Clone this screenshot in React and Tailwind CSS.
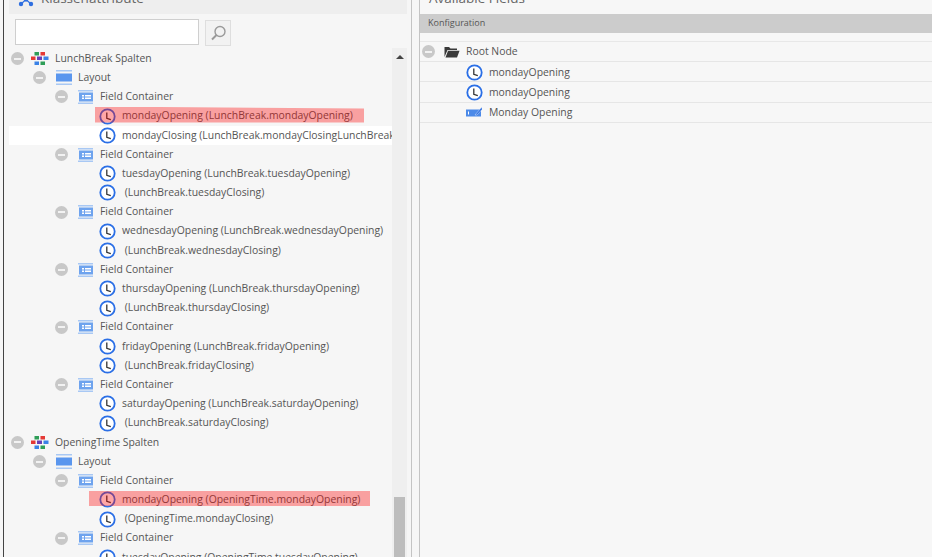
const FONT = "font-['Open_Sans',sans-serif]"

function Minus({ className = "" }) {
  return (
    <span className={`flex h-[13px] w-[13px] shrink-0 items-center justify-center rounded-full bg-[#c8c8c8] ${className}`}>
      <span className="h-[2px] w-[7px] bg-[#f2f2f2]" />
    </span>
  )
}

function ClockIcon() {
  return (
    <svg width="17" height="17" viewBox="0 0 17 17" className="shrink-0">
      <circle cx="8.5" cy="8.5" r="7.2" fill="#fff" stroke="#2b6fe6" strokeWidth="1.8" />
      <path d="M7.8 4.5V10.3L11.8 11.6" fill="none" stroke="#333" strokeWidth="1.3" />
    </svg>
  )
}

function ColumnsIcon() {
  return (
    <svg width="18" height="13" viewBox="0 0 18 13" className="shrink-0">
      <rect x="3.5" y="0" width="4.5" height="3.5" fill="#2f9e58" />
      <rect x="9.5" y="0" width="4.5" height="3.5" fill="#e53935" />
      <rect x="0" y="4.5" width="4.5" height="3.5" fill="#e53935" />
      <rect x="6" y="4.5" width="5" height="3.5" fill="#6a3fb5" />
      <rect x="12.5" y="4.5" width="5" height="3.5" fill="#3b82e6" />
      <rect x="3.5" y="9.5" width="4.5" height="3.5" fill="#3b82e6" />
      <rect x="9.5" y="9.5" width="4.5" height="3.5" fill="#2f9e58" />
    </svg>
  )
}

function LayoutIcon() {
  return (
    <svg width="16" height="15" viewBox="0 0 16 15" className="shrink-0">
      <rect x="0" y="0" width="16" height="1.5" fill="#a8c8f4" />
      <rect x="0" y="3.5" width="16" height="8" fill="#5a96ee" />
      <rect x="0" y="13.5" width="16" height="1.5" fill="#a8c8f4" />
    </svg>
  )
}

function ContainerIcon() {
  return (
    <svg width="15" height="14" viewBox="0 0 15 14" className="shrink-0">
      <rect x="0" y="0" width="15" height="1.5" fill="#a8c8f4" />
      <rect x="1" y="2.5" width="14" height="9" fill="#6ea3ee" />
      <rect x="4" y="5" width="2" height="1.5" fill="#fff" />
      <rect x="7" y="5" width="6" height="1.5" fill="#fff" />
      <rect x="4" y="7.5" width="2" height="1.5" fill="#fff" />
      <rect x="7" y="7.5" width="6" height="1.5" fill="#fff" />
      <rect x="0" y="12.5" width="15" height="1.5" fill="#a8c8f4" />
    </svg>
  )
}

function FolderIcon() {
  return (
    <svg width="16" height="12" viewBox="0 0 16 12" className="shrink-0">
      <path d="M0.5 11V1H5L6.5 2.5H13V4H3.5L0.5 11Z" fill="#3a3a3a" />
      <path d="M1.5 11.5L4 4.8H15.5L13 11.5Z" fill="#3a3a3a" />
    </svg>
  )
}

function InputIcon() {
  return (
    <svg width="16" height="10" viewBox="0 0 16 10" className="shrink-0">
      <rect x="0" y="2.5" width="15" height="7" fill="#4c8ae8" />
      <rect x="2" y="4.5" width="1" height="3" fill="#fff" />
      <path d="M9 8L14.5 1.5L16 0V2.5L11 8Z" fill="#2f6fe0" stroke="#fff" strokeWidth="0.4" />
    </svg>
  )
}

function SearchIcon() {
  return (
    <svg width="18" height="18" viewBox="0 0 18 18">
      <circle cx="11" cy="7.5" r="5" fill="none" stroke="#9a9a9a" strokeWidth="1.4" />
      <path d="M7.5 11L3 15.5" stroke="#9a9a9a" strokeWidth="2" />
    </svg>
  )
}

const groups = [
  {
    title: "LunchBreak Spalten",
    containers: [
      [["mondayOpening (LunchBreak.mondayOpening)", "first"], ["mondayClosing (LunchBreak.mondayClosingLunchBreak)", "hover"]],
      [["tuesdayOpening (LunchBreak.tuesdayOpening)"], [" (LunchBreak.tuesdayClosing)"]],
      [["wednesdayOpening (LunchBreak.wednesdayOpening)"], [" (LunchBreak.wednesdayClosing)"]],
      [["thursdayOpening (LunchBreak.thursdayOpening)"], [" (LunchBreak.thursdayClosing)"]],
      [["fridayOpening (LunchBreak.fridayOpening)"], [" (LunchBreak.fridayClosing)"]],
      [["saturdayOpening (LunchBreak.saturdayOpening)"], [" (LunchBreak.saturdayClosing)"]],
    ],
  },
  {
    title: "OpeningTime Spalten",
    containers: [
      [["mondayOpening (OpeningTime.mondayOpening)", "second"], [" (OpeningTime.mondayClosing)"]],
      [["tuesdayOpening (OpeningTime.tuesdayOpening)"]],
    ],
  },
]

function Row({ children }) {
  return <div className="flex h-[19.2px] shrink-0 items-center whitespace-pre">{children}</div>
}

function FieldRow({ label, mark }) {
  return (
    <div className={`relative flex h-[19.2px] shrink-0 items-center whitespace-pre pl-[90px] ${mark === "hover" ? "bg-white" : ""}`}>
      <ClockIcon />
      <span className="ml-[6px]">{label}</span>
      {mark === "first" && (
        <span className="absolute left-[86px] top-[0px] h-[16px] w-[269px] bg-[#ff0000]/35 [clip-path:polygon(0_0,100%_2px,100%_100%,0_100%)]" />
      )}
      {mark === "second" && (
        <span className="absolute left-[80px] top-[1px] h-[15px] w-[281px] bg-[#ff0000]/35" />
      )}
    </div>
  )
}

function Tree() {
  return (
    <div className="flex min-w-0 flex-1 flex-col overflow-hidden text-[10.4px] text-[#555]">
      {groups.map((g) => (
        <div key={g.title} className="flex flex-col">
          <Row>
            <Minus className="ml-[2px]" />
            <span className="ml-[7px]"><ColumnsIcon /></span>
            <span className="ml-[6px]">{g.title}</span>
          </Row>
          <Row>
            <Minus className="ml-[24px]" />
            <span className="ml-[10px]"><LayoutIcon /></span>
            <span className="ml-[6px]">Layout</span>
          </Row>
          {g.containers.map((c, i) => (
            <div key={i} className="flex flex-col">
              <Row>
                <Minus className="ml-[46px]" />
                <span className="ml-[10px]"><ContainerIcon /></span>
                <span className="ml-[7px]">Field Container</span>
              </Row>
              {c.map(([label, mark]) => (
                <FieldRow key={label} label={label} mark={mark} />
              ))}
            </div>
          ))}
        </div>
      ))}
    </div>
  )
}

function RightRow({ children }) {
  return (
    <div className="flex h-[20.4px] items-center border-b border-[#e6e6e6] pl-[46px]">{children}</div>
  )
}

export default function App() {
  return (
    <div className={`flex h-[557px] w-[932px] overflow-hidden bg-[#f6f6f6] ${FONT}`}>
      <div className="ml-[3px] flex w-[409px] shrink-0 flex-col overflow-hidden border-x border-l-[#444] border-r-[#c4c4c4] bg-[#f6f6f6] pl-[5px]">
        <div className="flex h-[14px] w-[398px] shrink-0 items-center overflow-hidden bg-[#eeeeee] pl-[9px] text-[13.5px] text-[#666]">
          <svg width="16" height="16" viewBox="0 0 16 16" className="-mt-[13px] shrink-0">
            <path d="M3 11L8 6.5L13 11" fill="none" stroke="#2f6fe0" strokeWidth="1.2" />
            <circle cx="8" cy="6.5" r="2.2" fill="#2f6fe0" />
            <circle cx="3" cy="11" r="2.2" fill="#2f6fe0" />
            <circle cx="13" cy="11" r="2.2" fill="#2f6fe0" />
          </svg>
          <span className="-mt-[17px] ml-[7px] whitespace-nowrap">Klassenattribute</span>
        </div>
        <div className="flex h-[35px] shrink-0 items-start gap-[6px] pl-[6px] pt-[5px]">
          <input className="h-[26px] w-[184px] border border-[#cfcfcf] bg-white" />
          <button className="mt-px flex h-[26px] w-[26px] items-center justify-center border border-[#dedede] bg-[#f2f2f2]">
            <SearchIcon />
          </button>
        </div>
        <div className="relative flex min-h-0 flex-1">
          <Tree />
          <div className="-mt-px flex w-[15px] shrink-0 flex-col items-center justify-between bg-[#efefef]">
            <span className="mt-[7px] h-0 w-0 border-x-[4px] border-b-[4px] border-x-transparent border-b-[#444]" />
            <span className="h-[60px] w-[11px] bg-[#bdbdbd]" />
          </div>
          <div className="w-[4px] shrink-0" />
        </div>
      </div>
      <div className="ml-[7px] flex min-w-0 flex-1 flex-col overflow-hidden border-l border-[#c4c4c4] bg-[#f7f7f7]">
        <div className="flex h-[14px] shrink-0 items-center overflow-hidden pl-[9px] text-[13.5px] text-[#666]">
          <span className="-mt-[17px] whitespace-nowrap">Available Fields</span>
        </div>
        <div className="flex h-[19px] shrink-0 items-center bg-[#cccccc] pb-[2px] pl-[8px] text-[9px] text-[#555]">Konfiguration</div>
        <div className="mt-[8px] flex flex-col border-t border-[#e8e8e8] text-[10.4px] text-[#555]">
          <div className="flex h-[20px] items-center border-b border-[#e6e6e6] pl-[2px]">
            <Minus />
            <span className="ml-[9px]"><FolderIcon /></span>
            <span className="ml-[6px]">Root Node</span>
          </div>
          <RightRow><span className="mt-[2px] flex items-center"><ClockIcon /><span className="ml-[6px]">mondayOpening</span></span></RightRow>
          <RightRow><span className="mt-px flex items-center"><ClockIcon /><span className="ml-[6px]">mondayOpening</span></span></RightRow>
          <RightRow><InputIcon /><span className="ml-[7px]">Monday Opening</span></RightRow>
        </div>
      </div>
    </div>
  )
}
